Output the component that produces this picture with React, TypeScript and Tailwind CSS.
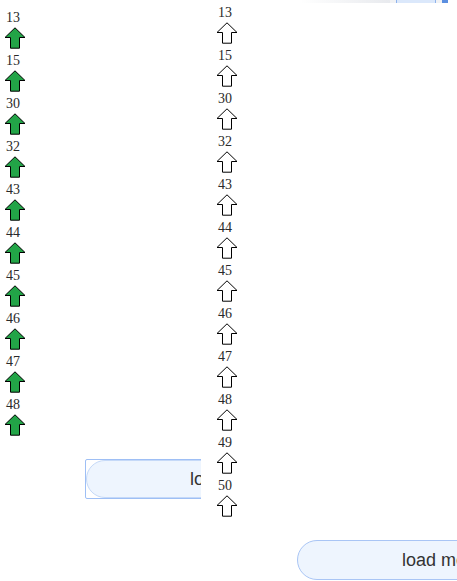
import React from "react";

const Arrow = ({ filled }: { filled: boolean }) => (
  <svg width="22" height="22" viewBox="0 0 22 22" className="block">
    <polygon
      points="11,0.8 21,10.5 15.5,10.5 15.5,21.2 6.5,21.2 6.5,10.5 1,10.5"
      fill={filled ? "#22a447" : "#ffffff"}
      stroke="#000"
      strokeWidth="1"
      strokeLinejoin="miter"
    />
  </svg>
);

const Item = ({ n, filled }: { n: number; filled: boolean }) => (
  <div className="h-[43px]">
    <div className="h-[16px] leading-[16px] text-[14px] text-[#2a2a2a] pl-[1px]" style={{ fontFamily: '"Liberation Serif", serif' }}>
      {n}
    </div>
    <div className="mt-[1px] -ml-[1px]">
      <Arrow filled={filled} />
    </div>
  </div>
);

const left = [13, 15, 30, 32, 43, 44, 45, 46, 47, 48];
const right = [13, 15, 30, 32, 43, 44, 45, 46, 47, 48, 49, 50];

export default function App() {
  return (
    <div className="w-[457px] h-[581px] overflow-hidden bg-white flex items-start">
      <div className="w-[201px] shrink-0 overflow-hidden pt-[10px] pl-[5px]">
        {left.map((n) => (
          <Item key={n} n={n} filled />
        ))}
        <div className="mt-[19px] ml-[80px] w-[290px] h-[40px] border border-[#9ebff5] rounded-[2px] p-0 shrink-0">
          <div className="w-full h-full rounded-full border border-[#c5d9f8] bg-[#eef5fe] flex items-center justify-center text-[18px] text-[#333]" style={{ fontFamily: '"Liberation Sans", sans-serif' }}>
            load more
          </div>
        </div>
      </div>
      <div className="flex-1 min-w-0 overflow-hidden bg-white relative">
        <div className="flex h-[3px] items-stretch ml-[99px]">
          <div className="w-[90px] bg-gradient-to-r from-[#ffffff] to-[#e8eaee]"></div>
          <div className="w-[6px] bg-[#f1f2f4]"></div>
          <div className="w-[40px] bg-[#dbe8fb] border-x border-[#8fb3ec]"></div>
          <div className="w-[6px] bg-[#f1f2f4]"></div>
          <div className="w-[6px] bg-[#5b8fe0]"></div>
        </div>
        <div className="pt-[2px] pl-[16px]">
          {right.map((n) => (
            <Item key={n} n={n} filled={false} />
          ))}
        </div>
        <div className="mt-[19px] ml-[96px] w-[290px] h-[40px] rounded-full border border-[#a9c5f5] bg-[#eef5fe] flex items-center justify-center text-[18px] text-[#333] shrink-0" style={{ fontFamily: '"Liberation Sans", sans-serif' }}>
          load more
        </div>
      </div>
    </div>
  );
}
